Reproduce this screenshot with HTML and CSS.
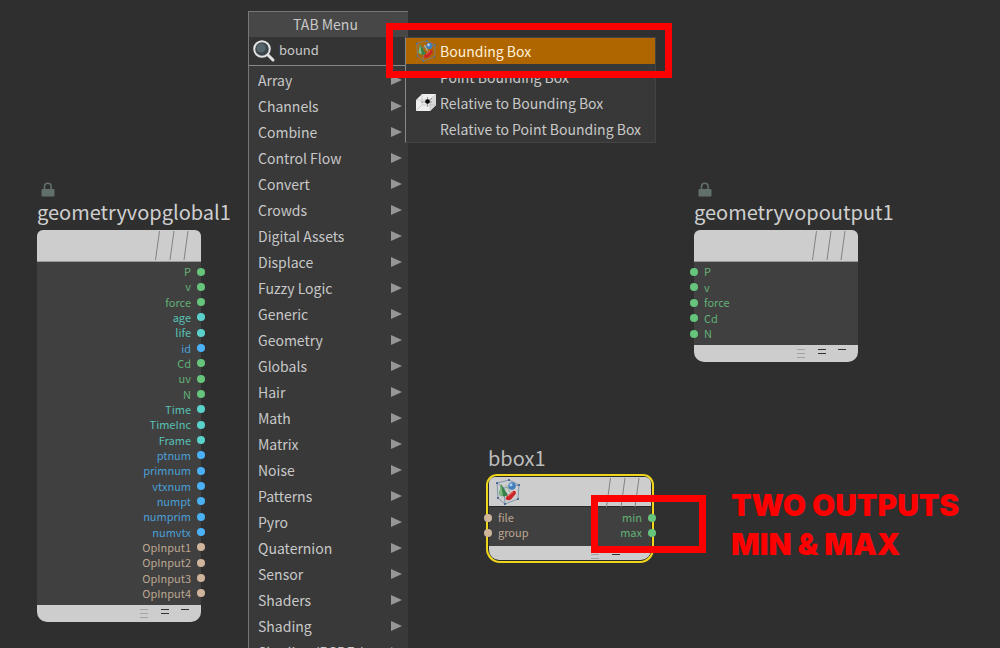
FILE: index.html
```
<!DOCTYPE html>
<html lang="en">
<head>
<meta charset="utf-8">
<title>Network editor</title>
<link rel="stylesheet" href="styles.css">
</head>
<body>
<svg class="defs" width="0" height="0" aria-hidden="true">
  <symbol id="lock" viewBox="0 0 14 15"><path d="M3.5 7V4.5a3.3 3.3 0 0 1 6.6 0V7" fill="none" stroke="#62706c" stroke-width="1.6"/><rect x="0.5" y="7" width="13" height="7.5" rx="1" fill="#62706c"/></symbol>
  <symbol id="slashes" viewBox="0 0 34 31"><path d="M4.5 1L.5 30M19 1l-4 29M33 1l-4 29" fill="none" stroke="#828282" stroke-width="1"/></symbol>
  <symbol id="rings" viewBox="0 0 50 10"><path d="M1 .5h8M1 4.500h8M1 8.500h8" stroke="#a3a3a3"/><path d="M22 .5h8M22 4.500h8M42 .5h8" stroke="#333"/></symbol>
  <symbol id="bbox" viewBox="0 0 26 26">
    <path d="M2 4L14 1l10 5-1 14-13 5-7-6zM2 4l7 5 15-3M9 9l1 16" fill="none" stroke="#6d87a5" stroke-width=".8"/>
    <path d="M6 5l7 11q-4 3-9-.5z" fill="#398148"/><path d="M6 5l2 12-4-1.500z" fill="#81bb82"/>
    <path d="M11 6l4 7" stroke="#a8b6a8" stroke-width="1.500"/>
    <circle cx="17" cy="7" r="3.700" fill="#427dbb"/><circle cx="16" cy="5.800" r="1.600" fill="#a9cff1"/>
    <path d="M12 17l6-5q3-1 3 2.500l-5 6q-4 2-5.500-1z" fill="#cc2528"/><path d="M13 17l5-4" stroke="#ee7770" stroke-width="1"/>
    <path d="M1 3h2v2H1zM13 0h2v2h-2zM23 5h2v2h-2zM22 19h2v2h-2zM9 24h2v2H9zM2 18h2v2H2z" fill="#4b6d96"/>
  </symbol>
</svg>
<main class="canvas">
  <section class="node node-global">
    <svg class="lock"><use href="#lock"/></svg>
    <h2 class="name">geometryvopglobal1</h2>
    <div class="shell">
      <div class="head"><svg class="slashes"><use href="#slashes"/></svg></div>
      <div class="ports"><ul class="outputs">
        <li class="vec">P</li><li class="vec">v</li><li class="vec">force</li><li class="flt">age</li><li class="flt">life</li><li class="int">id</li><li class="vec">Cd</li><li class="vec">uv</li><li class="vec">N</li><li class="flt">Time</li><li class="flt">TimeInc</li><li class="flt">Frame</li><li class="int">ptnum</li><li class="int">primnum</li><li class="int">vtxnum</li><li class="int">numpt</li><li class="int">numprim</li><li class="int">numvtx</li><li class="str">OpInput1</li><li class="str">OpInput2</li><li class="str">OpInput3</li><li class="str">OpInput4</li>
      </ul></div>
      <div class="foot"><svg class="rings"><use href="#rings"/></svg></div>
    </div>
  </section>

  <section class="node node-output">
    <svg class="lock"><use href="#lock"/></svg>
    <h2 class="name">geometryvopoutput1</h2>
    <div class="shell">
      <div class="head"><svg class="slashes"><use href="#slashes"/></svg></div>
      <div class="ports"><ul class="inputs">
        <li class="vec">P</li><li class="vec">v</li><li class="vec">force</li><li class="vec">Cd</li><li class="vec">N</li>
      </ul></div>
      <div class="foot"><svg class="rings"><use href="#rings"/></svg></div>
    </div>
  </section>

  <section class="node node-bbox">
    <h2 class="name">bbox1</h2>
    <div class="shell selected">
      <div class="head"><svg class="node-icon"><use href="#bbox"/></svg><svg class="slashes"><use href="#slashes"/></svg></div>
      <div class="ports">
        <ul class="inputs"><li class="str">file</li><li class="str">group</li></ul>
        <ul class="outputs"><li class="vec">min</li><li class="vec">max</li></ul>
      </div>
      <div class="foot"><svg class="rings"><use href="#rings"/></svg></div>
    </div>
  </section>

  <nav class="menu" aria-label="TAB Menu">
    <h1 class="menu-title">TAB Menu</h1>
    <label class="search">
      <svg class="lens" viewBox="0 0 24 24" aria-hidden="true"><path d="M15 15l6 6" stroke="#e2e2e2" stroke-width="3" stroke-linecap="round"/><circle cx="10" cy="10" r="7.800" fill="#3c474c" stroke="#e2e2e2" stroke-width="2"/><circle cx="9" cy="9" r="4.500" fill="#56646b"/></svg>
      <input type="text" value="bound" aria-label="Search operators">
    </label>
    <div class="items">
      <button>Array</button><button>Channels</button><button>Combine</button><button>Control Flow</button><button>Convert</button><button>Crowds</button><button>Digital Assets</button><button>Displace</button><button>Fuzzy Logic</button><button>Generic</button><button>Geometry</button><button>Globals</button><button>Hair</button><button>Math</button><button>Matrix</button><button>Noise</button><button>Patterns</button><button>Pyro</button><button>Quaternion</button><button>Sensor</button><button>Shaders</button><button>Shading</button><button>Shading (BSDFs)</button>
    </div>
  </nav>

  <div class="submenu">
    <button class="active"><svg class="icon"><use href="#bbox"/></svg>Bounding Box</button>
    <button><span class="icon"></span>Point Bounding Box</button>
    <button><svg class="icon" viewBox="0 0 22 22"><path d="M1 8l6-6h14v11l-6 6H1z" fill="#eee"/><path d="M15 8l6-6v11l-6 6z" fill="#d8d8d8"/><path d="M1 8h14v11M15 8l6-6M7 2v11h14M7 13l-6 6" fill="none" stroke="#bbb" stroke-width=".6"/><path d="M12.500 5v10M6 10h11M13 9l4-3" stroke="#888" stroke-width=".8"/><circle cx="12.500" cy="9.500" r="2.300" fill="#080808"/></svg>Relative to Bounding Box</button>
    <button><span class="icon"></span>Relative to Point Bounding Box</button>
  </div>

  <div class="mark mark-menu"></div>
  <div class="mark mark-ports"></div>
  <p class="note">TWO OUTPUTS<br>MIN &amp; MAX</p>
</main>
</body>
</html>
```
FILE: styles.css
```
* { box-sizing: border-box; }
body {
  margin: 0;
  background: #2f2f2f;
  color: #c8c8c8;
  font-family: "Noto Sans CJK SC", "Noto Sans", sans-serif;
}
h1, h2, p, ul { margin: 0; padding: 0; font-weight: 400; }
ul { list-style: none; }
.defs { position: absolute; }
.canvas { position: relative; height: 100vh; overflow: hidden; }

/* Nodes */
.node { position: absolute; width: 164px; }
.node-global { left: 37px; top: 182px; }
.node-output { left: 694px; top: 182px; }
.node-bbox { left: 488px; top: 443px; }
.lock { display: block; width: 14px; height: 15px; margin-left: 4px; }
.name { padding-bottom: 4px; font-size: 20px; line-height: 29px; white-space: nowrap; color: #cfcfcf; }
.head {
  display: flex;
  justify-content: flex-end;
  height: 32px;
  padding-right: 12px;
  background: #cdcdcd;
  border-bottom: 1px solid #999;
  border-radius: 6px 6px 0 0;
}
.slashes { width: 34px; height: 31px; }
.ports {
  display: flex;
  justify-content: space-between;
  padding: 2px 0 4px;
  background: #404040;
}
.node-global .ports { height: 343px; }
.node-output .ports { height: 83px; }
.ports ul { display: flex; flex-direction: column; justify-content: space-between; }
.ports li {
  display: flex;
  align-items: center;
  gap: 6px;
  font-size: 11px;
  line-height: 15px;
}
.ports li::before {
  content: "";
  width: 8px;
  height: 8px;
  border-radius: 50%;
  background: var(--dot);
}
.inputs { margin-left: -4px; }
.outputs { margin-left: auto; margin-right: -4px; }
.outputs li { flex-direction: row-reverse; }
.vec { --dot: #66c47c; color: #62b076; }
.flt { --dot: #5ad2cb; color: #58c1b4; }
.int { --dot: #4bb1f6; color: #4a9fd6; }
.str { --dot: #d0b59d; color: #bda692; }
.foot {
  display: flex;
  justify-content: flex-end;
  height: 17px;
  padding: 4px 12px 0 0;
  background: #cdcdcd;
  border-radius: 0 0 10px 10px;
}
.rings { width: 50px; height: 10px; }
.selected { border-radius: 9px 9px 12px 12px; box-shadow: 0 0 0 2px #efd51c; border: 1px solid #292929; background: #292929; }
.selected .head { height: 30px; padding-right: 11px; border-bottom-color: #292929; }
.selected .ports { padding: 3px 0 6px; }
.selected .inputs { margin-left: -5px; }
.selected .outputs { margin-right: -5px; }
.selected .foot { height: 14px; padding-right: 11px; }
.node-bbox .name { color: #bdbdbd; }
.node-icon { width: 26px; height: 26px; margin: 2px auto 0 6px; }

/* Menus */
button {
  display: flex;
  align-items: center;
  width: 100%;
  height: 26px;
  padding: 0;
  border: 0;
  background: none;
  color: inherit;
  font: 14px/26px "Noto Sans CJK SC", "Noto Sans", sans-serif;
  text-align: left;
  white-space: nowrap;
}
.menu {
  position: absolute;
  left: 248px;
  top: 11px;
  width: 160px;
  background: #393939;
  border-left: 1px solid #777;
  border-top: 1px solid #777;
}
.menu-title {
  padding-right: 6px;
  background: #474747;
  font-size: 14px;
  line-height: 25px;
  text-align: center;
}
.search {
  display: flex;
  align-items: center;
  gap: 3px;
  height: 29px;
  padding-left: 3px;
  background: #343434;
  border-bottom: 1px solid #888;
}
.lens { flex: none; width: 24px; height: 24px; }
.search input {
  width: 100%;
  min-width: 0;
  padding: 0 0 2px;
  border: 0;
  outline: 0;
  background: none;
  color: #c8c8c8;
  font: 13px/22px "Noto Sans CJK SC", "Noto Sans", sans-serif;
}
.items { padding-top: 1px; }
.items button { justify-content: space-between; padding: 0 6px 0 9px; }
.items button::after {
  content: "";
  border-left: 11px solid #969696;
  border-top: 5px solid transparent;
  border-bottom: 5px solid transparent;
}
.submenu {
  position: absolute;
  left: 405px;
  top: 37px;
  width: 251px;
  background: #383838;
  border: 1px solid #444;
  border-left-color: #888;
}
.submenu button { gap: 3px; padding-left: 9px; }
.submenu .active { background: #b06600; color: #fff1d8; }
.icon { flex: none; width: 22px; height: 22px; }

/* Annotations */
.mark { position: absolute; border: 7px solid #f00; }
.mark-menu { left: 386px; top: 23px; width: 286px; height: 55px; }
.mark-ports { left: 591px; top: 495px; width: 115px; height: 58px; }
.note {
  position: absolute;
  left: 731px;
  top: 486px;
  color: #f00;
  font: 900 30px/39px Inter, sans-serif;
  white-space: nowrap;
}
```
